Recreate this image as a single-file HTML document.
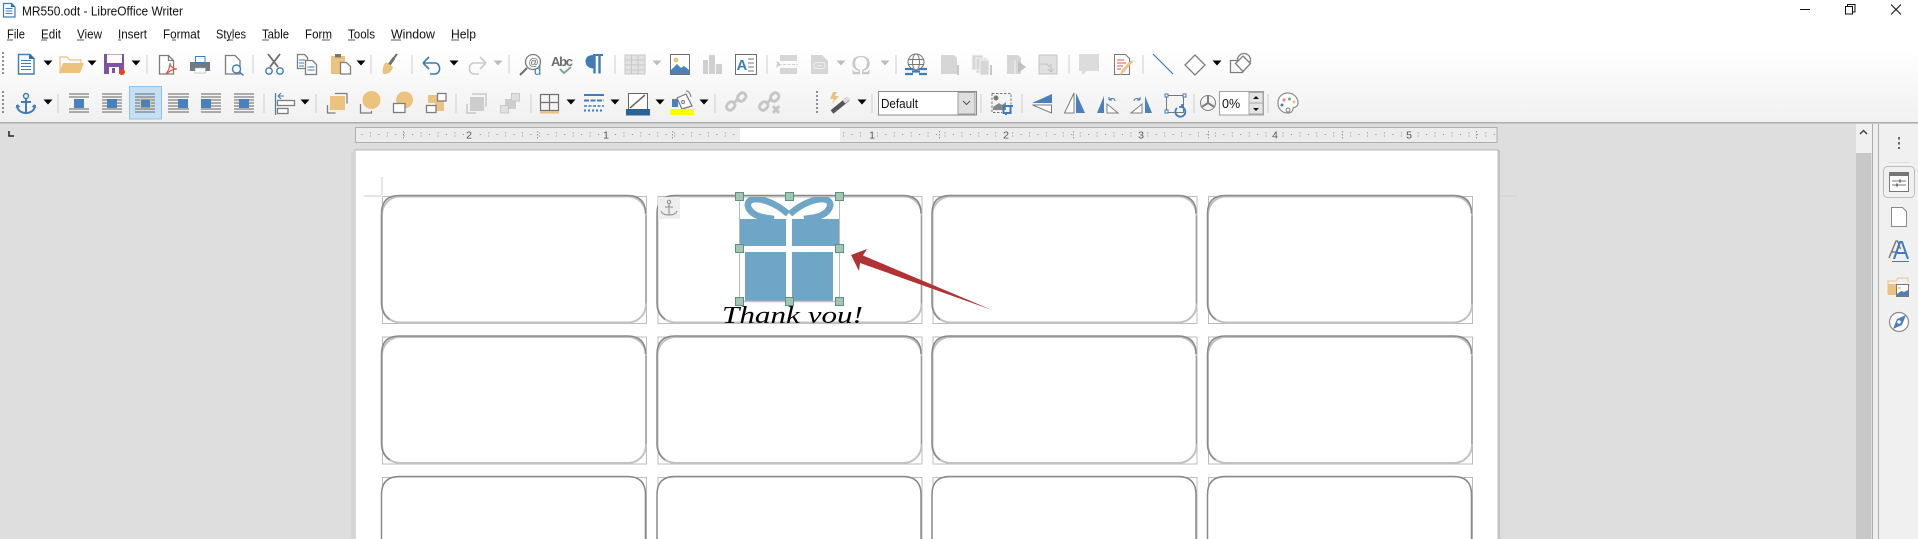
<!DOCTYPE html>
<html><head><meta charset="utf-8"><title>MR550.odt - LibreOffice Writer</title>
<style>
html,body{margin:0;padding:0;background:#dedede;width:1918px;height:539px;overflow:hidden}
svg{display:block;position:absolute;left:0;top:0}
text{font-family:"Liberation Sans",sans-serif}
.m{font-size:12.5px;fill:#111}
.b{fill:none;stroke:#3f7cb8;stroke-width:1.4}
.g{fill:none;stroke:#7d7d7d;stroke-width:1.3}
.gb{fill:#fff;stroke:#7d7d7d;stroke-width:1.3}
.d{fill:#d6d6d6}
.dl{fill:none;stroke:#c8c8c8;stroke-width:1.5}
.t{fill:#ecc27f}
.bf{fill:#4a80bb}
.s{stroke:#cfcfcf;stroke-width:1;fill:none}
.gl{stroke:#7f7f7f;stroke-width:1.3;fill:none}
</style></head><body>
<svg width="1918" height="539" viewBox="0 0 1918 539" xmlns="http://www.w3.org/2000/svg">
<defs>
<linearGradient id="tb" x1="0" y1="0" x2="0" y2="1"><stop offset="0" stop-color="#fff"/><stop offset=".4" stop-color="#fff"/><stop offset="1" stop-color="#f0f0f0"/></linearGradient>
<path id="ar" d="M-4.5 -2.5h9l-4.5 5z" fill="#000"/>
<path id="ad" d="M-4.5 -2.5h9l-4.5 5z" fill="#bdbdbd"/>
<pattern id="tick" x="353" y="127" width="16.9" height="15" patternUnits="userSpaceOnUse"><rect x="0" y="5.500" width="1" height="1" fill="#8a8a8a"/><rect x="0" y="8.500" width="1" height="1" fill="#8a8a8a"/><rect x="8.450" y="7" width="1" height="1" fill="#8a8a8a"/></pattern>
<g id="card">
<rect x="1" y="1" width="264" height="127" fill="none" stroke="#bdbdbd" stroke-width="1"/>
<rect x="0.500" y="1" width="264" height="126" rx="18" fill="#fff" stroke="#c2c2c2" stroke-width="2"/>
<path d="M8 124Q0 118 0 108V18Q0 0 18 0H246Q264 0 264 18" fill="none" stroke="#8c8888" stroke-width="1.500"/>
<path d="M264.500 20V108" fill="none" stroke="#999" stroke-width="1"/>
</g>
<g id="cardtop">
<path d="M1 62.500V1H265V62.500" fill="none" stroke="#bdbdbd" stroke-width="1"/>
<path d="M0.500 62.500V19Q0.500 1 18.500 1H246.500Q264.500 1 264.500 19V62.500Z" fill="#fff"/>
<path d="M0 62.500V18Q0 0 18 0H246Q264 0 264 18V62.500" fill="none" stroke="#8c8888" stroke-width="1.500"/>
</g>
<clipPath id="tk"><rect x="700" y="300" width="190" height="23"/></clipPath>
</defs>

<rect width="1918" height="123" fill="url(#tb)"/>
<rect y="122" width="1918" height="1.500" fill="#aeaeae"/>
<rect y="123.500" width="1918" height="415.500" fill="#dedede"/>

<!-- title -->
<path d="M3.500 3.500h8l3.500 3.500v10h-11.500z" fill="#fff" stroke="#3f7cb8" stroke-width="1.200"/>
<path d="M11 3l4 4h-4z" fill="#2f6da8"/><path d="M5.500 8.500h7M5.500 11h7M5.500 13.500h7" stroke="#3f7cb8"/>
<text x="22" y="15.500" font-size="12.500" fill="#111" textLength="161" lengthAdjust="spacingAndGlyphs">MR550.odt - LibreOffice Writer</text>

<!-- window controls -->
<path d="M1800 9.500h10" stroke="#111"/>
<path d="M1845.500 6.500h7v7.500h-7zM1847.500 6.500v-2h7.500v7.500h-2.500" fill="none" stroke="#111"/>
<path d="M1891 4.500l10 10M1901 4.500l-10 10" stroke="#111"/>

<!-- menu -->
<g class="m">
<text x="7" y="38.500" class="m" textLength="18" lengthAdjust="spacingAndGlyphs">File</text>
<text x="41" y="38.500" class="m" textLength="20" lengthAdjust="spacingAndGlyphs">Edit</text>
<text x="77" y="38.500" class="m" textLength="25" lengthAdjust="spacingAndGlyphs">View</text>
<text x="118" y="38.500" class="m" textLength="29" lengthAdjust="spacingAndGlyphs">Insert</text>
<text x="163" y="38.500" class="m" textLength="37" lengthAdjust="spacingAndGlyphs">Format</text>
<text x="216" y="38.500" class="m" textLength="30" lengthAdjust="spacingAndGlyphs">Styles</text>
<text x="262" y="38.500" class="m" textLength="27" lengthAdjust="spacingAndGlyphs">Table</text>
<text x="305" y="38.500" class="m" textLength="27" lengthAdjust="spacingAndGlyphs">Form</text>
<text x="348" y="38.500" class="m" textLength="27" lengthAdjust="spacingAndGlyphs">Tools</text>
<text x="391" y="38.500" class="m" textLength="44" lengthAdjust="spacingAndGlyphs">Window</text>
<text x="451" y="38.500" class="m" textLength="25" lengthAdjust="spacingAndGlyphs">Help</text>
</g>
<path d="M7 40h6M41 40h6M77 40h7M118 40h3M172 40h4M228 40h5M262 40h7M322 40h8M348 40h7M391 40h10M451 40h8" stroke="#222" stroke-width=".8"/>

<!-- grips -->
<path d="M3 52v23M3 91v24M817 91v24" stroke="#8f8f8f" stroke-width="2" stroke-dasharray="2 2"/>

<!-- separators toolbar 1 -->
<path class="s" d="M147 55v19M253 55v19M371 55v19M412 55v19M509 55v19M615 55v19M767 55v19M896 55v19M1069 55v19M1143 55v19"/>
<!-- separators toolbar 2 -->
<path class="s" d="M58 94v19M264 94v19M316 94v19M456 94v19M531 94v19M715 94v19M872 94v19M981 94v19M1022 94v19M1194 94v19M1268 94v19"/>

<!-- arrows -->
<g>
<use href="#ar" x="48" y="63"/><use href="#ar" x="92" y="63"/><use href="#ar" x="136" y="63"/><use href="#ar" x="361" y="63"/><use href="#ar" x="454" y="63"/><use href="#ad" x="498" y="63"/><use href="#ad" x="657" y="63"/><use href="#ad" x="841" y="63"/><use href="#ad" x="885" y="63"/><use href="#ar" x="1217" y="63"/>
<use href="#ar" x="48" y="102"/><use href="#ar" x="305" y="102"/><use href="#ar" x="571" y="102"/><use href="#ar" x="615" y="102"/><use href="#ar" x="660" y="102"/><use href="#ar" x="704" y="102"/><use href="#ar" x="862" y="102"/>
</g>

<!-- new doc -->
<path d="M18.500 54.500h11.500l4 4v15.500h-15.500z" class="b" style="fill:#fff"/>
<path d="M29 54l5 5h-5z" fill="#2f6da8"/>
<path d="M21 60.500h10M21 63.500h10M21 66.500h10M21 69.500h10" stroke="#3f7cb8"/>
<!-- open -->
<path d="M60 73l0-16h7l3 3h11l0 4h-3z" fill="none" stroke="#ecc27f" stroke-width="1.200"/>
<path d="M59 73l4-10h21l-4 10z" class="t"/>
<!-- save -->
<path d="M104 54h20v20h-20z" fill="#8052a6"/>
<rect x="107" y="54.500" width="15" height="8.500" fill="#fff"/>
<rect x="109" y="67" width="10" height="7" fill="#fff"/><rect x="112" y="68" width="3" height="5" fill="#8052a6"/>
<circle cx="122" cy="72" r="3" fill="#e4451f"/>
<!-- pdf -->
<path d="M159.500 55.500h9l5 5v13.500h-14z" class="gb"/>
<path d="M168.500 55.500v5h5" class="g"/>
<path d="M166 74c3-4 4-8 4-11 0 3 3 6 7 6-3 0-7 1-10 5" fill="none" stroke="#dd5a4a" stroke-width="1.200"/>
<!-- print -->
<path d="M190 62h20v9h-20z" fill="#6f7a84"/>
<rect x="195.500" y="56.500" width="9.500" height="6" fill="#fff" stroke="#3f7cb8"/>
<rect x="195" y="68" width="10.500" height="5" fill="#fff" stroke="#aaa" stroke-width=".6"/>
<!-- preview -->
<path d="M225.500 55.500h9.500l5 5v13.500h-14.500z" class="gb"/>
<circle cx="236.500" cy="69" r="4" class="b" style="fill:#fff"/><path d="M239.500 72l4 3.500" class="b"/>
<!-- cut -->
<path d="M268 54l10 13M280 54l-10 13" stroke="#6d6d6d" stroke-width="1.800"/>
<circle cx="269" cy="71" r="3.200" class="b"/><circle cx="280" cy="71" r="3.200" class="b"/>
<!-- copy -->
<path d="M297.500 54.500h7l3 3v11h-10z" class="gb"/>
<path d="M305.500 60.500h7l4 4v10h-11z" class="gb"/>
<path d="M299 60h6M299 63h5M299 66h5M307.500 67h7M307.500 70h7" stroke="#3f7cb8"/>
<!-- paste -->
<rect x="331" y="56" width="14" height="18" class="t"/><rect x="335" y="54" width="6" height="3.500" fill="#777"/>
<path d="M340.500 62.500h6l4 4v7.500h-10z" class="gb"/>
<!-- clear -->
<path d="M394 58l-5 7" stroke="#707070" stroke-width="3"/>
<path d="M397 54l-4 5" stroke="#707070" stroke-width="2"/>
<path d="M386 62l7 5c-1 4-4 7-8 7h-2c-1-4 0-9 3-12z" class="t"/>
<!-- undo -->
<path d="M423 63l6-6M423 63l6 6M423 63h13a6 6 0 0 1 0 11h-6" fill="none" stroke="#3f7cb8" stroke-width="1.600"/>
<!-- redo -->
<path d="M486 63l-6-6M486 63l-6 6M486 63h-13a6 6 0 0 0 0 11h6" fill="none" stroke="#cbcbcb" stroke-width="1.600"/>
<!-- find -->
<circle cx="533" cy="62" r="7.500" class="g"/><path d="M527 68l-7 7" stroke="#6d6d6d" stroke-width="2"/>
<text x="528.500" y="65.500" font-size="10" fill="#666">@</text>
<text x="534" y="75" font-size="13" fill="#3f7cb8">d</text>
<!-- abc -->
<text x="551" y="66" font-size="13" font-weight="bold" fill="#6e6e6e" textLength="22">Abc</text>
<path d="M560 69l4 4 7-6" fill="none" stroke="#6aa38c" stroke-width="1.800"/>
<!-- pilcrow -->
<path d="M594.500 55.500v18M599.500 55.500v18" stroke="#3f7cb8" stroke-width="2.400"/>
<path d="M593.500 55c-6 0-8 3-8 6.500s3 7 8 7z" fill="#3f7cb8"/><path d="M593 55h10" stroke="#3f7cb8" stroke-width="2"/>
<!-- table -->
<rect x="625" y="55" width="20" height="19" fill="#e2e2e2" stroke="#c8c8c8"/>
<path d="M625 60h20M625 65h20M625 70h20M631.500 55v19M638 55v19" stroke="#c8c8c8"/>
<!-- image -->
<rect x="670.500" y="54.500" width="19" height="20" fill="#fff" stroke="#6e6e6e"/>
<circle cx="676" cy="60" r="2.500" class="t"/>
<path d="M671 74v-4l6-6 4 4 3-2 5 4v4z" class="bf"/>
<!-- chart -->
<path d="M703 60h5v14h-5zM709 55h6v19h-6zM716 64h6v10h-6z" fill="#cfcfcf"/>
<!-- textbox -->
<rect x="735.500" y="54.500" width="21" height="20" fill="#fff" stroke="#6e6e6e"/>
<text x="736.500" y="70" font-size="15" font-weight="bold" fill="#3f7cb8">A</text>
<path d="M748 59h6M748 63h6M748 67h6M748 71h6" stroke="#777"/>
<!-- page break -->
<path d="M780 55h17v6h-17zM780 68h17v6h-17z" class="d"/>
<path d="M777 62l4 2.500-4 2.500zM783 64.500h15" fill="#cfcfcf" stroke="#cfcfcf" stroke-dasharray="3 1.500"/>
<!-- field -->
<path d="M811 55h11l6 6v13h-17z" class="d"/><rect x="814" y="62.500" width="11" height="6" rx="2" fill="none" stroke="#efefef"/><path d="M817 65.500h5" stroke="#efefef"/>
<!-- omega -->
<text x="851" y="74" font-size="27" fill="#c8c8c8" style="font-family:'Liberation Serif',serif">Ω</text>
<!-- hyperlink -->
<circle cx="916" cy="62" r="8" fill="none" stroke="#777"/><ellipse cx="916" cy="62" rx="3.500" ry="8" fill="none" stroke="#777"/><path d="M908 59.500h16M908 64.500h16" stroke="#777"/>
<path d="M905 69h8M919 69h8M905 74h8M919 74h8M912 71.500h8" stroke="#3f7cb8" stroke-width="2.200"/>
<!-- footnote / endnote / bookmark / xref -->
<path d="M941 55h13l3 3v16h-16z" class="d"/><path d="M958 65v10" stroke="#c8c8c8" stroke-width="2"/>
<path d="M972 55h11v15h-11zM976 58h11v15h-11z" class="d" stroke="#f4f4f4"/><path d="M980 60h9v15h-9z" class="d" stroke="#f4f4f4"/><path d="M991 65v10" stroke="#c8c8c8" stroke-width="2"/>
<path d="M1007 55h11l3 3v16h-14z" class="d"/><path d="M1015 60v14" stroke="#f4f4f4"/><path d="M1018 61l8 6-8 6z" fill="#c0c0c0"/>
<rect x="1039" y="55" width="18" height="19" fill="#e0e0e0" stroke="#c4c4c4"/><path d="M1039 64h8l3 3" stroke="#c0c0c0" fill="none"/><path d="M1051 64v7m-3-2l3 3 3-3" stroke="#c0c0c0" fill="none"/>
<!-- comment -->
<path d="M1079 54h20v17h-12l-5 4v-4h-3z" fill="#dcdcdc"/>
<!-- track -->
<path d="M1114.500 54.500h11l4 4v16h-15z" fill="#fff" stroke="#777"/>
<path d="M1117 60h7M1117 63h9M1117 66h6M1117 69h4" stroke="#d9573c"/>
<path d="M1133 62l-10 11-3 2 1-4 10-11z" class="t"/>
<!-- line -->
<path d="M1153 54l20 20" stroke="#3f7cb8" stroke-width="1.200"/>
<!-- diamond -->
<path d="M1195 55l10 10-10 10-10-10z" fill="#fff" stroke="#7d7d7d" stroke-width="1.300"/>
<!-- shapes -->
<circle cx="1244" cy="60" r="6.500" class="gb"/>
<rect x="1230.500" y="60.500" width="12" height="12" class="gb"/>
<path d="M1243 56l7.500 7.500-7.500 8-7.500-8z" class="gb"/>

<!-- toolbar 2 -->
<rect x="129.500" y="86.500" width="32" height="32.500" fill="#c5e0f5" stroke="#8ec3ee"/>
<!-- anchor -->
<circle cx="26" cy="96" r="2.500" fill="none" stroke="#3f7cb8" stroke-width="1.500"/>
<path d="M26 98v15M21 102h10M17 105c0 5 4 8 9 8s9-3 9-8" fill="none" stroke="#3f7cb8" stroke-width="2"/>
<path d="M15.500 108l2-4 3 3zM36.500 108l-2-4-3 3z" class="bf"/>

<!-- wrap -->
<g class="gl">
<path d="M69 94h20M69 97h20M69 109h20M69 112h20"/>
<path d="M102 94h20M102 97h20M102 100h5M117 100h5M102 103h5M117 103h5M102 106h5M117 106h5M102 109h20M102 112h20"/>
<path d="M135 94h20M135 97h20M135 100h5M150 100h5M135 103h5M150 103h5M135 106h5M150 106h5M135 109h20M135 112h20"/>
<path d="M168 94h21M168 97h21M168 100h10M168 103h10M168 106h10M168 109h21M168 112h21"/>
<path d="M201 94h20M201 97h20M211 100h10M211 103h10M211 106h10M201 109h20M201 112h20"/>
<path d="M234 94h20M234 97h20M234 100h5M249 100h5M234 103h5M249 103h5M234 106h5M249 106h5M234 109h20M234 112h20"/>
</g>
<rect x="74" y="99" width="10" height="9" class="bf"/>
<rect x="107" y="99" width="10" height="9" class="bf"/>
<rect x="140.500" y="99" width="10" height="9" class="bf" stroke="#ecc27f" stroke-width="1"/>
<rect x="178" y="99" width="10" height="9" class="bf"/>
<rect x="201" y="99" width="10" height="9" class="bf"/>
<rect x="239" y="99" width="10" height="9" class="bf"/>

<!-- align -->
<path d="M275.500 93v22" stroke="#3f7cb8" stroke-width="1.200"/>
<path d="M284 96h-6m3-3l-3 3 3 3" fill="none" stroke="#3f7cb8"/>
<rect x="277.500" y="100.500" width="17" height="5" class="gb"/><rect x="277.500" y="108.500" width="10.500" height="5" class="gb"/>

<!-- arrange -->
<path d="M335 93.500h12v10" class="g"/>
<rect x="330" y="96" width="15" height="14" class="t"/>
<path d="M327.500 105v8h8" class="g"/>
<path d="M360.500 104v9h11v-2" class="g"/><circle cx="371.500" cy="100" r="9" class="t"/>
<circle cx="404.500" cy="100" r="8.500" class="t"/><rect x="393.500" y="103.500" width="11.500" height="9" class="gb"/>
<rect x="428" y="95" width="9" height="8" class="t"/><rect x="435" y="101" width="9" height="10" class="t"/>
<rect x="426.500" y="105.500" width="9.500" height="7" class="gb"/><rect x="437.500" y="93.500" width="8.500" height="7.500" class="gb"/>
<path d="M472 94h14v13M467 104v9h9" class="dl"/><rect x="470" y="97" width="14" height="14" fill="#cdcdcd"/>
<rect x="505" y="99" width="11" height="10" fill="#cdcdcd"/><rect x="500.500" y="105.500" width="8" height="7.500" fill="#e0e0e0" stroke="#c8c8c8"/><rect x="511.500" y="93.500" width="8" height="7.500" fill="#e0e0e0" stroke="#c8c8c8"/>

<!-- borders -->
<rect x="540.500" y="94.500" width="18" height="16" fill="none" stroke="#6f6f6f" stroke-width="1.200"/><path d="M549.500 94v16M540 102.500h19" stroke="#6f6f6f" stroke-width="1.200"/>
<rect x="540" y="111" width="19" height="2.500" class="t"/>
<!-- border style -->
<path d="M584 95h20" stroke="#3f7cb8" stroke-width="2"/><path d="M584 100.500h20" stroke="#3f7cb8" stroke-width="2" stroke-dasharray="5 1.500"/><path d="M584 106h20" stroke="#3f7cb8" stroke-width="1.500" stroke-dasharray="3 1.500"/><path d="M584 110.500h20" stroke="#3f7cb8" stroke-width="2" stroke-dasharray="2 2"/>
<!-- border color -->
<rect x="628.500" y="93.500" width="19" height="16" fill="#fff" stroke="#666"/><path d="M630 108l15-13" stroke="#666" stroke-width="1.500"/>
<rect x="626" y="109" width="24" height="6.500" fill="#2b6199"/>
<!-- fill -->
<path d="M672 99h6v8h-6z" class="bf"/><path d="M677 98l9-4 6 12-10 3z" fill="#fff" stroke="#777" stroke-width="1.200"/><circle cx="683" cy="102" r="1.500" fill="none" stroke="#777"/>
<path d="M686 91c3 0 4 2 5 6" stroke="#777" fill="none"/>
<rect x="670" y="109" width="24" height="6" fill="#ffff00"/>
<!-- chains -->
<g fill="none" stroke="#c6c6c6" stroke-width="3">
<rect x="726" y="103" width="9" height="7" rx="3.500" transform="rotate(-45 730 106)"/><rect x="737" y="94" width="9" height="7" rx="3.500" transform="rotate(-45 741 97)"/><path d="M733 104l6-6"/>
<rect x="759" y="103" width="9" height="7" rx="3.500" transform="rotate(-45 763 106)"/><rect x="770" y="94" width="9" height="7" rx="3.500" transform="rotate(-45 774 97)"/><path d="M766 104l6-6M773 106l6 7M779 106l-6 7"/>
</g>
<!-- wand -->
<path d="M833 92l-3 7h4l-2 5 7-8h-4l2-4z" class="t"/>
<path d="M832 112l16-13" stroke="#555" stroke-width="4.500"/><path d="M844 102l5-4" stroke="#ddd" stroke-width="4"/>
<!-- dropdown -->
<rect x="878.500" y="91.500" width="98" height="23.500" fill="#fff" stroke="#8a8a8a"/>
<text x="881" y="108" font-size="12.500" fill="#111" textLength="37" lengthAdjust="spacingAndGlyphs">Default</text>
<rect x="958" y="92.500" width="17" height="21.500" fill="#dfdfdf" stroke="#9d9d9d"/>
<path d="M963 101l3.500 3.500 3.500-3.500" fill="none" stroke="#555"/>
<!-- crop -->
<path d="M992 93.500h19v11M992 93.500v19h10" fill="none" stroke="#777" stroke-dasharray="2.500 1.500"/>
<circle cx="996" cy="98" r="2.500" fill="#777"/><path d="M993 110v-3l6-4 3 2 4-3v8z" fill="#888"/>
<path d="M1003.500 106h7v7h-7z" fill="none" stroke="#3f7cb8" stroke-width="2"/>
<path d="M1006 115v-2M1013 106h-2" stroke="#3f7cb8" stroke-width="2"/>
<!-- flips -->
<path d="M1032 103l20-9v9z" class="bf"/><path d="M1032.500 105l19 0v8z" fill="#fff" stroke="#7d7d7d"/>
<path d="M1074 93v20h-9.500z" fill="#fff" stroke="#7d7d7d"/><path d="M1076 93l9 20h-9z" class="bf"/>
<path d="M1097 113l7-17v17z" class="bf"/><path d="M1107 113v-9l11 9z" fill="#fff" stroke="#7d7d7d"/><path d="M1109 101c3-3 6-1 6 1m-6-1v-3m0 3h3" fill="none" stroke="#3f7cb8" transform="translate(0,-1)"/>
<path d="M1152 113l-7-17v17z" class="bf"/><path d="M1142 113v-9l-11 9z" fill="#fff" stroke="#7d7d7d"/><path d="M1140 100c-3-3-6-1-6 1m6-1v-3m0 3h-3" fill="none" stroke="#3f7cb8"/>
<!-- rotate -->
<rect x="1166.500" y="95.500" width="17" height="17" fill="none" stroke="#777"/>
<g fill="#fff" stroke="#3f7cb8"><rect x="1165" y="94" width="3" height="3"/><rect x="1183" y="94" width="3" height="3"/><rect x="1165" y="110" width="3" height="3"/></g>
<path d="M1178 106a5 5 0 1 0 5-1m0 0h-3m3 0v-3" transform="translate(-1,2)" fill="none" stroke="#3f7cb8" stroke-width="1.800"/>
<!-- transparency -->
<circle cx="1208" cy="103" r="7.500" fill="none" stroke="#7f7f7f"/><path d="M1208 103v-7.500M1208 103l-6.500 4M1208 103l6.500 4" stroke="#7f7f7f" stroke-width="2"/>
<!-- spin -->
<rect x="1219.500" y="91.500" width="44" height="23.500" fill="#fff" stroke="#a0a0a0"/>
<text x="1222" y="108" font-size="12.500" fill="#111">0%</text>
<rect x="1249" y="92.500" width="14" height="21.500" fill="#e4e4e4" stroke="#a8a8a8"/><path d="M1249 103h14" stroke="#a8a8a8"/>
<path d="M1256 96l3 3h-6zM1256 111l3-3h-6z" fill="#111"/>
<!-- palette -->
<path d="M1288 93c-6 0-10 4-10 10s4 10 10 10c4 0 5-3 5-5 0-1 5 0 5-5 0-5-4-10-10-10z" fill="#fff" stroke="#8a8a8a" stroke-width="1.200"/>
<circle cx="1284" cy="100" r="1.500" fill="#e97a8d"/><circle cx="1289.500" cy="99" r="1.500" fill="#5fae7e"/><circle cx="1294" cy="102" r="1.500" fill="#ecc27f"/><circle cx="1282" cy="105" r="1.500" fill="#3f7cb8"/><circle cx="1288" cy="110" r="2" fill="none" stroke="#777"/>

<!-- ruler -->
<rect x="355.500" y="127.500" width="1141.500" height="15" fill="#ececec" stroke="#aeaeae"/>
<rect x="356" y="128" width="1140" height="14" fill="url(#tick)"/>
<g font-size="10.500" fill="#555" text-anchor="middle">
<rect x="464" y="129" width="10" height="12" fill="#ececec"/><text x="469" y="138.500">2</text>
<rect x="601" y="129" width="10" height="12" fill="#ececec"/><text x="606" y="138.500">1</text>
<rect x="867" y="129" width="10" height="12" fill="#ececec"/><text x="872" y="138.500">1</text>
<rect x="1001" y="129" width="10" height="12" fill="#ececec"/><text x="1006" y="138.500">2</text>
<rect x="1136" y="129" width="10" height="12" fill="#ececec"/><text x="1141" y="138.500">3</text>
<rect x="1270" y="129" width="10" height="12" fill="#ececec"/><text x="1275" y="138.500">4</text>
<rect x="1404" y="129" width="10" height="12" fill="#ececec"/><text x="1409" y="138.500">5</text>
</g>
<path d="M403.500 131v8M537.500 131v8M672.500 131v8M939.500 131v8M1073.500 131v8M1208.500 131v8M1342.500 131v8M1476.500 131v8" stroke="#999" stroke-dasharray="1.500 1.500"/>
<rect x="740" y="128" width="100" height="14" fill="#fff"/>
<path d="M9 131v5h5" fill="none" stroke="#222" stroke-width="1.500"/>

<!-- page -->
<path d="M354.500 539V149.500H1498" fill="none" stroke="#cbcbcb" stroke-width="1.500"/>
<rect x="1497" y="150" width="3" height="389" fill="#c2c2c2"/>
<rect x="351" y="152" width="4" height="387" fill="#d6d6d6"/>
<rect x="356" y="151" width="1141.500" height="388" fill="#fff"/>
<path d="M364 196h17M382 177v18M1500 196h17" stroke="#d4d4d4" stroke-width="1.200"/>

<!-- cards -->
<use href="#card" x="381.500" y="195.500"/><use href="#card" x="657" y="195.500"/><use href="#card" x="932" y="195.500"/><use href="#card" x="1207.500" y="195.500"/>
<use href="#card" x="381.500" y="336"/><use href="#card" x="657" y="336"/><use href="#card" x="932" y="336"/><use href="#card" x="1207.500" y="336"/>
<use href="#cardtop" x="381.500" y="476.500"/><use href="#cardtop" x="657" y="476.500"/><use href="#cardtop" x="932" y="476.500"/><use href="#cardtop" x="1207.500" y="476.500"/>

<!-- anchor marker -->
<rect x="658" y="197" width="22" height="22" fill="#eeeeee"/>
<circle cx="669" cy="202" r="1.700" fill="none" stroke="#8a8a8a"/>
<path d="M669 204v11M665 207h8M661 211c1 3 4 4 8 4s7-1 8-4" fill="none" stroke="#8a8a8a"/>

<!-- gift -->
<path d="M739 219h47v27h-47zM792 219h47v27h-47zM745 252h41v49h-41zM792 252h41v49h-41z" fill="#6fa6c8"/>
<path d="M788 214C776 203 760 197 751 200C745 203 748 211 756 215C762 218 768 218 774 219" fill="none" stroke="#6fa6c8" stroke-width="6.500"/>
<path d="M790 214C802 203 818 197 827 200C833 203 830 211 822 215C816 218 810 218 804 219" fill="none" stroke="#6fa6c8" stroke-width="6.500"/>
<rect x="739.500" y="196.500" width="100" height="105" fill="none" stroke="#bdbdbd"/>
<path d="M739 301.500h100" stroke="#c4c4c4" stroke-width="1.500"/>

<text x="722" y="323" font-size="24" font-style="italic" fill="#000" clip-path="url(#tk)" textLength="141" lengthAdjust="spacingAndGlyphs" style="font-family:'Liberation Serif',serif">Thank you!</text>

<!-- handles -->
<g fill="#a3c5b6" stroke="#5f8f7f">
<rect x="735.500" y="192.500" width="8" height="8"/><rect x="785.500" y="192.500" width="8" height="8"/><rect x="835.500" y="192.500" width="8" height="8"/>
<rect x="735.500" y="244.500" width="8" height="8"/><rect x="835.500" y="244.500" width="8" height="8"/>
<rect x="735.500" y="297.500" width="8" height="8"/><rect x="785.500" y="297.500" width="8" height="8"/><rect x="835.500" y="297.500" width="8" height="8"/>
</g>

<!-- red arrow -->
<path d="M851 255l16-6-4 6.500L992 310 860 263l-1 8z" fill="#b03234"/>

<!-- scrollbar and sidebar -->
<rect x="1856" y="124" width="15.500" height="415" fill="#c8c8c8"/>
<rect x="1856" y="124" width="15.500" height="29" fill="#f0f0f0"/>
<path d="M1860 134l3.500-3.500 3.500 3.500" fill="none" stroke="#444" stroke-width="1.500"/>
<rect x="1871.500" y="124" width="7" height="415" fill="#efefef"/>
<path d="M1872.500 124v415M1878.500 124v415" stroke="#aeaeae"/>
<rect x="1879" y="124" width="39" height="415" fill="#f0f0f0"/>
<path d="M1899 137v12" stroke="#666" stroke-width="2" stroke-dasharray="2.500 2.500"/>
<path d="M1888 162.500h21" stroke="#dcdcdc"/>
<rect x="1883.500" y="166.500" width="31" height="31" rx="4" fill="none" stroke="#bcbcbc"/>
<rect x="1889.500" y="172.500" width="19" height="19" fill="#fff" stroke="#777"/>
<rect x="1889" y="172" width="20" height="4" fill="#777"/>
<path d="M1892 181h14M1892 185h14" stroke="#777"/><rect x="1899" y="179.500" width="2" height="3" fill="#777"/><rect x="1896" y="183.500" width="2" height="3" fill="#777"/>
<path d="M1891.500 207.500h11l4 4v15h-15z" fill="#fff" stroke="#8a8a8a"/>
<path d="M1889 258l7-17h1.500l3 8M1892 252h6" fill="none" stroke="#6e6e6e" stroke-width="1.300"/>
<path d="M1894 259l6-17h2l6 17M1897 253h9" fill="none" stroke="#3f7cb8" stroke-width="2"/><path d="M1892 261.500h17" stroke="#3f7cb8"/>
<path d="M1888 294v-13h8l2-3h10v4" fill="none" stroke="#ecc27f"/><path d="M1888 284h22l-6 11h-16z" class="t"/>
<rect x="1896.500" y="284.500" width="12" height="12" fill="#fff" stroke="#777"/><circle cx="1899.500" cy="288" r="1.300" class="t"/><path d="M1897 296v-2l4-3 3 1 4-2v6z" class="bf"/>
<circle cx="1899" cy="322" r="9.500" fill="#fff" stroke="#8a8a8a" stroke-width="1.200"/>
<path d="M1906 315l-4 10-9 4 4-10z" class="bf"/><circle cx="1899" cy="322" r="1.800" fill="#fff"/>
</svg>
</body></html>
